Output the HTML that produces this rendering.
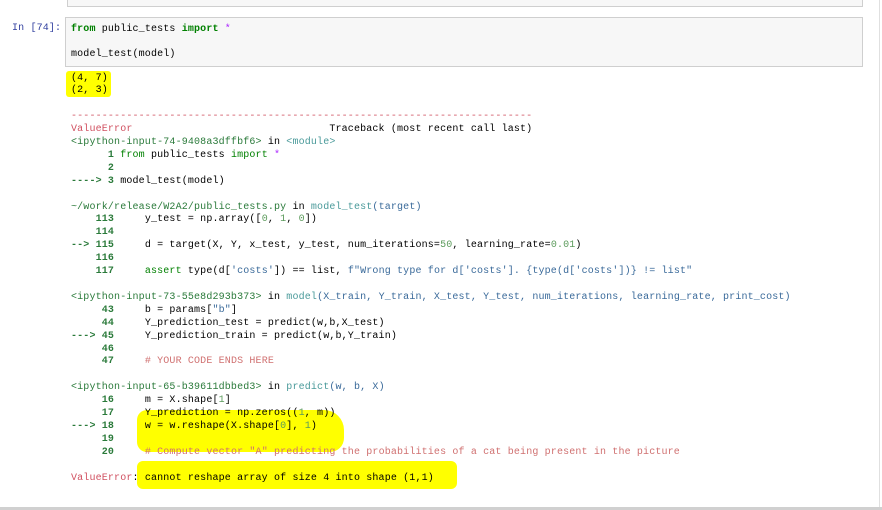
<!DOCTYPE html>
<html><head><style>
body{margin:0;width:882px;height:510px;background:#fff;overflow:hidden;position:relative;font-family:"Liberation Mono",monospace;}
pre{margin:0;font-family:"Liberation Mono",monospace;font-size:10px;line-height:12.9px;letter-spacing:0.15px;color:#000;position:absolute;}
.hl{position:absolute;background:#ffff00;border-radius:6px;}
.r{color:#d05060}.g{color:#2a7a3a;font-weight:bold}.c{color:#4a9a9a}.k{color:#008000;font-weight:bold}.p{color:#aa22ff}.n{color:#5a9a5a}.s{color:#ba2121}.cm{color:#d07070}.b{color:#3a6a9a}
</style></head><body>
<div style="position:absolute;left:67px;top:-2px;width:794px;height:7px;border:1px solid #cfcfcf;background:#f7f7f7"></div>
<div style="position:absolute;left:65px;top:17px;width:796px;height:48px;border:1px solid #cfcfcf;background:#f7f7f7"></div>
<pre style="left:12px;top:23px;color:#303f9f">In [74]:</pre>
<pre style="left:71px;top:16.5px;line-height:25.5px"><span class="k">from</span> public_tests <span class="k">import</span> <span class="p">*</span>
model_test(model)</pre>
<div class="hl" style="left:66px;top:71px;width:45px;height:26px;border-radius:3px"></div>
<div class="hl" style="left:137px;top:410px;width:207px;height:42px;border-radius:10px 20px 14px 10px"></div>
<div class="hl" style="left:137px;top:461px;width:320px;height:28px;border-radius:6px"></div>
<pre style="left:71px;top:72.5px">(4, 7)
(2, 3)

<span class="r">---------------------------------------------------------------------------</span>
<span class="r">ValueError</span>                                Traceback (most recent call last)
<span class="g" style="font-weight:normal">&lt;ipython-input-74-9408a3dffbf6&gt;</span> in <span class="c">&lt;module&gt;</span>
<span class="g">      1</span> <span class="k" style="font-weight:normal">from</span> public_tests <span class="k" style="font-weight:normal">import</span> <span class="p">*</span>
<span class="g">      2</span>
<span class="g">----&gt; 3</span> model_test(model)

<span class="g" style="font-weight:normal">~/work/release/W2A2/public_tests.py</span> in <span class="c">model_test</span><span class="b">(target)</span>
<span class="g">    113</span>     y_test = np.array([<span class="n">0</span>, <span class="n">1</span>, <span class="n">0</span>])
<span class="g">    114</span>
<span class="g">--&gt; 115</span>     d = target(X, Y, x_test, y_test, num_iterations=<span class="n">50</span>, learning_rate=<span class="n">0.01</span>)
<span class="g">    116</span>
<span class="g">    117</span>     <span class="k" style="font-weight:normal">assert</span> type(d[<span class="b">'costs'</span>]) == list, <span class="b">f"Wrong type for d['costs']. {type(d['costs'])} != list"</span>

<span class="g" style="font-weight:normal">&lt;ipython-input-73-55e8d293b373&gt;</span> in <span class="c">model</span><span class="b">(X_train, Y_train, X_test, Y_test, num_iterations, learning_rate, print_cost)</span>
<span class="g">     43</span>     b = params[<span class="b">"b"</span>]
<span class="g">     44</span>     Y_prediction_test = predict(w,b,X_test)
<span class="g">---&gt; 45</span>     Y_prediction_train = predict(w,b,Y_train)
<span class="g">     46</span>
<span class="g">     47</span>     <span class="cm"># YOUR CODE ENDS HERE</span>

<span class="g" style="font-weight:normal">&lt;ipython-input-65-b39611dbbed3&gt;</span> in <span class="c">predict</span><span class="b">(w, b, X)</span>
<span class="g">     16</span>     m = X.shape[<span class="n">1</span>]
<span class="g">     17</span>     Y_prediction = np.zeros((<span class="n">1</span>, m))
<span class="g">---&gt; 18</span>     w = w.reshape(X.shape[<span class="n">0</span>], <span class="n">1</span>)
<span class="g">     19</span>
<span class="g">     20</span>     <span class="cm"># Compute vector "A" predicting the probabilities of a cat being present in the picture</span>

<span class="r">ValueError</span>: cannot reshape array of size 4 into shape (1,1)</pre>
<div style="position:absolute;left:0;top:507px;width:882px;height:3px;background:#d0d0d0"></div>
<div style="position:absolute;left:879px;top:0;width:1px;height:507px;background:#e0e0e0"></div>
</body></html>
